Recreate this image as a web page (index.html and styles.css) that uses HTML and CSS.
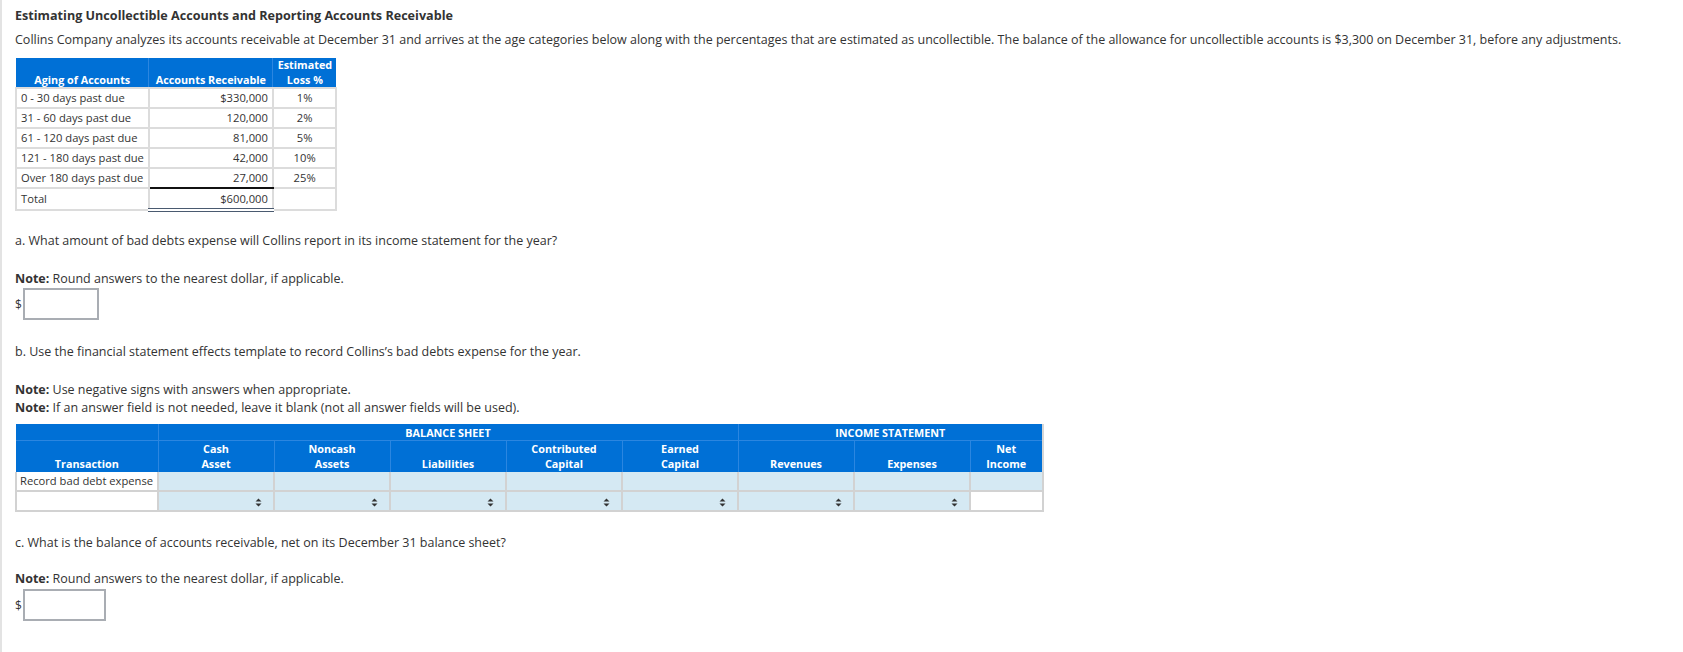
FILE: index.html
```html
<!DOCTYPE html>
<html>
<head>
<meta charset="utf-8">
<title>Estimating Uncollectible Accounts</title>
<link rel="stylesheet" href="styles.css">
</head>
<body>
<div class="page">
  <h1 class="title">Estimating Uncollectible Accounts and Reporting Accounts Receivable</h1>
  <p class="intro">Collins Company analyzes its accounts receivable at December 31 and arrives at the age categories below along with the percentages that are estimated as uncollectible. The balance of the allowance for uncollectible accounts is $3,300 on December 31, before any adjustments.</p>

  <table class="aging">
    <thead>
      <tr>
        <th class="c-age">Aging of Accounts</th>
        <th class="c-ar">Accounts Receivable</th>
        <th class="c-loss">Estimated<br>Loss %</th>
      </tr>
    </thead>
    <tbody>
      <tr><td>0 - 30 days past due</td><td class="num">$330,000</td><td class="pct">1%</td></tr>
      <tr><td>31 - 60 days past due</td><td class="num">120,000</td><td class="pct">2%</td></tr>
      <tr><td>61 - 120 days past due</td><td class="num">81,000</td><td class="pct">5%</td></tr>
      <tr><td>121 - 180 days past due</td><td class="num">42,000</td><td class="pct">10%</td></tr>
      <tr><td>Over 180 days past due</td><td class="num sub">27,000</td><td class="pct">25%</td></tr>
      <tr class="total"><td>Total</td><td class="num dbl">$600,000</td><td class="pct"></td></tr>
    </tbody>
  </table>

  <p class="q q-a">a. What amount of bad debts expense will Collins report in its income statement for the year?</p>
  <p class="note note-a"><b>Note:</b> Round answers to the nearest dollar, if applicable.</p>
  <div class="answer"><span class="dollar">$</span><span class="box"></span></div>

  <p class="q q-b">b. Use the financial statement effects template to record Collins’s bad debts expense for the year.</p>
  <p class="note note-b"><b>Note:</b> Use negative signs with answers when appropriate.<br><b>Note:</b> If an answer field is not needed, leave it blank (not all answer fields will be used).</p>

  <table class="fse">
    <colgroup>
      <col class="w-tr"><col class="w-c"><col class="w-c"><col class="w-c"><col class="w-c"><col class="w-c"><col class="w-c"><col class="w-c"><col class="w-net">
    </colgroup>
    <thead>
      <tr class="group">
        <th></th>
        <th colspan="5">BALANCE SHEET</th>
        <th colspan="3">INCOME STATEMENT</th>
      </tr>
      <tr class="heads">
        <th>Transaction</th>
        <th>Cash<br>Asset</th>
        <th>Noncash<br>Assets</th>
        <th>Liabilities</th>
        <th>Contributed<br>Capital</th>
        <th>Earned<br>Capital</th>
        <th>Revenues</th>
        <th>Expenses</th>
        <th>Net<br>Income</th>
      </tr>
    </thead>
    <tbody>
      <tr>
        <td class="tr-name">Record bad debt expense</td>
        <td class="blue"></td><td class="blue"></td><td class="blue"></td><td class="blue"></td><td class="blue"></td><td class="blue"></td><td class="blue"></td><td class="blue"></td>
      </tr>
      <tr>
        <td class="tr-name"></td>
        <td class="blue sel"><span class="arrows"><svg width="7" height="9" viewBox="0 0 7 9"><path d="M3.5 0.5 L6.5 3.5 L0.5 3.5 Z M0.5 5.5 L6.5 5.5 L3.5 8.5 Z" fill="#333"/></svg></span></td>
        <td class="blue sel"><span class="arrows"><svg width="7" height="9" viewBox="0 0 7 9"><path d="M3.5 0.5 L6.5 3.5 L0.5 3.5 Z M0.5 5.5 L6.5 5.5 L3.5 8.5 Z" fill="#333"/></svg></span></td>
        <td class="blue sel"><span class="arrows"><svg width="7" height="9" viewBox="0 0 7 9"><path d="M3.5 0.5 L6.5 3.5 L0.5 3.5 Z M0.5 5.5 L6.5 5.5 L3.5 8.5 Z" fill="#333"/></svg></span></td>
        <td class="blue sel"><span class="arrows"><svg width="7" height="9" viewBox="0 0 7 9"><path d="M3.5 0.5 L6.5 3.5 L0.5 3.5 Z M0.5 5.5 L6.5 5.5 L3.5 8.5 Z" fill="#333"/></svg></span></td>
        <td class="blue sel"><span class="arrows"><svg width="7" height="9" viewBox="0 0 7 9"><path d="M3.5 0.5 L6.5 3.5 L0.5 3.5 Z M0.5 5.5 L6.5 5.5 L3.5 8.5 Z" fill="#333"/></svg></span></td>
        <td class="blue sel"><span class="arrows"><svg width="7" height="9" viewBox="0 0 7 9"><path d="M3.5 0.5 L6.5 3.5 L0.5 3.5 Z M0.5 5.5 L6.5 5.5 L3.5 8.5 Z" fill="#333"/></svg></span></td>
        <td class="blue sel"><span class="arrows"><svg width="7" height="9" viewBox="0 0 7 9"><path d="M3.5 0.5 L6.5 3.5 L0.5 3.5 Z M0.5 5.5 L6.5 5.5 L3.5 8.5 Z" fill="#333"/></svg></span></td>
        <td class="white"></td>
      </tr>
    </tbody>
  </table>

  <p class="q q-c">c. What is the balance of accounts receivable, net on its December 31 balance sheet?</p>
  <p class="note note-c"><b>Note:</b> Round answers to the nearest dollar, if applicable.</p>
  <div class="answer answer-c"><span class="dollar">$</span><span class="box box-wide"></span></div>
</div>
</body>
</html>
```

FILE: styles.css
```css
html, body {
  margin: 0;
  padding: 0;
  background: #fff;
}
body {
  font-family: "Open Sans", "Liberation Sans", sans-serif;
  color: #333;
}
.page {
  border-left: 2px solid #e3e3e3;
  padding-left: 13px;
  min-height: 652px;
  box-sizing: border-box;
  padding-top: 7px;
}
.title {
  margin: 0;
  font-size: 12.6px;
  line-height: 18px;
  font-weight: 700;
}
.intro {
  margin: 6px 0 0;
  font-size: 12.5px;
  line-height: 18px;
}

/* aging table */
.aging {
  margin-top: 9px;
  border-collapse: collapse;
  font-size: 11.2px;
}
.aging th {
  background: #0070d6;
  color: #fff;
  font-weight: 700;
  font-size: 10.8px;
  line-height: 14.5px;
  vertical-align: bottom;
  padding: 0 4px 0;
  text-align: center;
  white-space: nowrap;
  border-right: 1px solid #2b86e0;
}
.aging th:last-child { border-right: none; }
.aging .c-age { width: 124px; }
.aging .c-ar { width: 115px; }
.aging .c-loss { width: 55px; }
.aging td {
  height: 18px;
  padding: 0 4px;
  border: 2px solid #dcdcdc;
  line-height: 16px;
  white-space: nowrap;
}
.aging td.num { text-align: right; }
.aging td.pct { text-align: center; }
.aging td.sub { border-bottom: 2px solid #111; }
.aging td.dbl { border-bottom: 4px double #4a5a70; }
.aging tr.total td { height: 19px; }

/* questions */
.q, .note {
  margin: 0;
  font-size: 12.5px;
  line-height: 18px;
}
.q-a { margin-top: 20px; }
.note-a { margin-top: 20px; }
.answer {
  display: flex;
  align-items: center;
  margin-top: 0;
}
.answer-c { margin-top: 1px; }
.dollar {
  font-size: 12px;
  width: 8px;
}
.box {
  display: block;
  width: 72px;
  height: 28px;
  border: 2px solid #a9adb3;
}
.box-wide { width: 79px; }
.q-b { margin-top: 23px; }
.note-b { margin-top: 20px; }

/* FSE table */
.fse {
  margin-top: 7px;
  border-collapse: collapse;
  table-layout: fixed;
  width: 1028px;
  font-size: 11.2px;
  border-right: 2px solid #d6d6d6;
  border-bottom: 2px solid #d6d6d6;
}
.w-tr { width: 142px; }
.w-c { width: 116px; }
.w-net { width: 73px; }
.fse th {
  background: #0070d6;
  color: #fff;
  font-weight: 700;
  font-size: 10.8px;
  line-height: 15px;
  text-align: center;
  vertical-align: bottom;
  padding: 0;
  border-left: 1px solid #2b86e0;
}
.fse th:first-child { border-left: none; }
.fse tr.group th {
  height: 16px;
  border-bottom: 1px solid #2b86e0;
  vertical-align: middle;
}
.fse tr.heads th {
  height: 30px;
  padding-bottom: 1px;
}
.fse td {
  height: 18px;
  padding: 0;
  border: 2px solid #d2d2d2;
  border-top: none;
}
.fse td.tr-name {
  background: #fff;
  padding-left: 3px;
  white-space: nowrap;
  line-height: 18px;
}
.fse td.blue { background: #d5e9f3; }
.fse td.white { background: #fff; }
.fse td.sel { text-align: right; }
.arrows {
  display: inline-flex;
  margin-right: 11px;
  vertical-align: middle;
}

.q-c { margin-top: 22px; }
.note-c { margin-top: 18px; }
```
